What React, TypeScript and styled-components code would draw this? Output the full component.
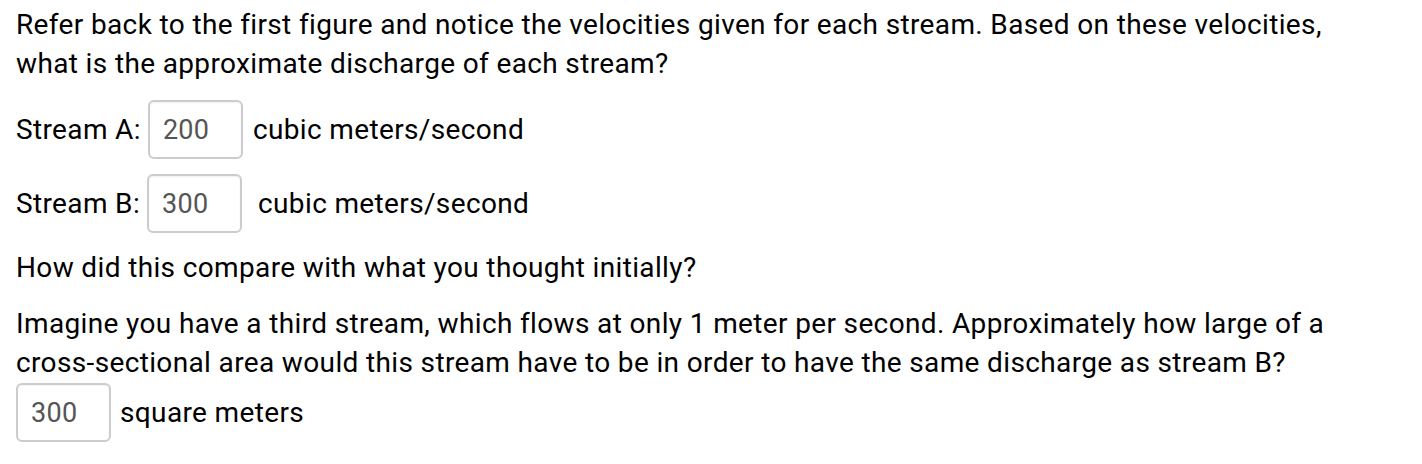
import React from 'react';
import styled, { createGlobalStyle } from 'styled-components';

const GlobalStyle = createGlobalStyle`
  html, body {
    margin: 0;
    background: #fff;
  }

  body {
    font-family: Roboto, 'Liberation Sans', Arial, sans-serif;
    color: #000;
  }
`;

interface Answer {
  label?: string;
  value: string;
  unit: string;
  unitGap?: number;
}

const streamAnswers: Answer[] = [
  { label: 'Stream A:', value: '200', unit: 'cubic meters/second', unitGap: 10 },
  { label: 'Stream B:', value: '300', unit: 'cubic meters/second', unitGap: 16 },
];

const AnswerRow = ({ label, value, unit, unitGap = 9 }: Answer) => (
  <Row>
    {label && <Label>{label}</Label>}
    <AnswerBox type="text" defaultValue={value} $hasLabel={!!label} />
    <Unit $gap={unitGap}>{unit}</Unit>
  </Row>
);

const App = () => {
  return (
    <>
      <GlobalStyle />
      <Worksheet>
        <Question>
          Refer back to the first figure and notice the velocities given for each stream. Based on these
          velocities, what is the approximate discharge of each stream?
        </Question>

        <Answers>
          {streamAnswers.map(answer => (
            <AnswerRow key={answer.label} {...answer} />
          ))}
        </Answers>

        <Question $gap={17}>How did this compare with what you thought initially?</Question>

        <Question $gap={1}>
          Imagine you have a third stream, which flows at only 1 meter per second. Approximately how large of a
          cross-sectional area would this stream have to be in order to have the same discharge as stream B?
        </Question>

        <AnswerRow value="300" unit="square meters" unitGap={9} />
      </Worksheet>
    </>
  );
};

export default App;

const Worksheet = styled.div`
  width: 1350px;
  padding: 5px 0 0 16px;
  font-size: 28px;
  letter-spacing: 0.36px;
  line-height: 39px;
`;

const Question = styled.p<{ $gap?: number }>`
  margin: 0 0 ${p => p.$gap ?? 17}px;
`;

const Answers = styled.div`
  display: flex;
  flex-direction: column;
  gap: 15px;
  margin-bottom: 15px;
`;

const Row = styled.div`
  display: flex;
  align-items: center;
`;

const Label = styled.span`
  white-space: nowrap;
`;

const AnswerBox = styled.input<{ $hasLabel: boolean }>`
  box-sizing: border-box;
  width: 95px;
  height: 59px;
  margin-left: ${p => (p.$hasLabel ? 7 : 0)}px;
  padding: 0 13px;
  border: 2px solid #ccc;
  border-radius: 6px;
  box-shadow: inset 0 1px 2px rgba(0, 0, 0, 0.06);
  font-family: inherit;
  font-size: 27px;
  letter-spacing: 0.3px;
  color: #555;
  background: #fff;
  outline: none;
`;

const Unit = styled.span<{ $gap: number }>`
  margin-left: ${p => p.$gap}px;
  white-space: nowrap;
`;
